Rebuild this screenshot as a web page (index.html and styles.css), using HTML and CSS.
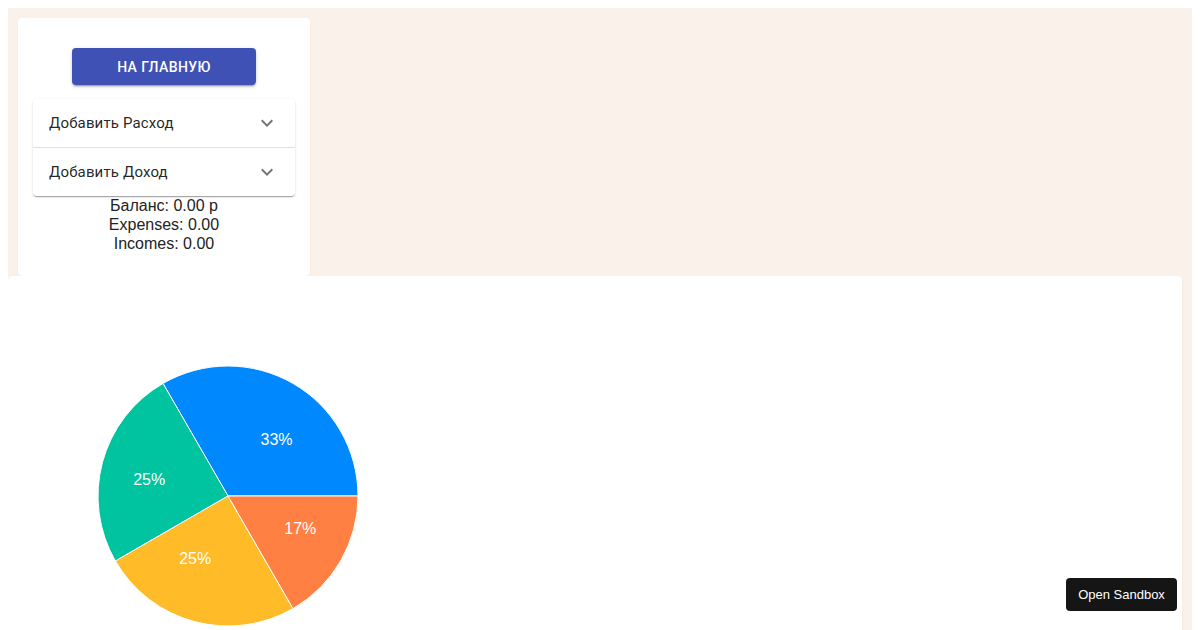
FILE: index.html
```html
<!DOCTYPE html>
<html lang="ru">
<head>
<meta charset="utf-8">
<title>Budget</title>
<link rel="stylesheet" href="styles.css">
</head>
<body>
<div class="app">
  <div class="side-card">
    <button class="home-btn">На главную</button>
    <div class="accordion">
      <div class="acc-row">
        <span class="acc-title">Добавить Расход</span>
        <svg class="acc-icon" viewBox="0 0 24 24" width="24" height="24"><path d="M16.59 8.59 12 13.17 7.41 8.59 6 10l6 6 6-6z"/></svg>
      </div>
      <div class="acc-row acc-row-2">
        <span class="acc-title">Добавить Доход</span>
        <svg class="acc-icon" viewBox="0 0 24 24" width="24" height="24"><path d="M16.59 8.59 12 13.17 7.41 8.59 6 10l6 6 6-6z"/></svg>
      </div>
    </div>
    <div class="totals">
      <div>Баланс: 0.00 р</div>
      <div>Expenses: 0.00</div>
      <div>Incomes: 0.00</div>
    </div>
  </div>
  <div class="chart-card">
    <svg class="pie" width="400" height="400" viewBox="0 0 400 400">
      <g stroke="#fff" stroke-width="1">
        <path fill="#0088FE" d="M200,200 L330,200 A130,130 0 0 0 135,87.42 Z"/>
        <path fill="#00C49F" d="M200,200 L135,87.42 A130,130 0 0 0 87.42,265 Z"/>
        <path fill="#FFBB28" d="M200,200 L87.42,265 A130,130 0 0 0 265,312.58 Z"/>
        <path fill="#FF8042" d="M200,200 L265,312.58 A130,130 0 0 0 330,200 Z"/>
      </g>
      <g class="pie-labels" fill="#fff">
        <text x="232.5" y="143.7" text-anchor="start" dominant-baseline="central">33%</text>
        <text x="137.2" y="183.2" text-anchor="end" dominant-baseline="central">25%</text>
        <text x="183.2" y="262.8" text-anchor="end" dominant-baseline="central">25%</text>
        <text x="256.3" y="232.5" text-anchor="start" dominant-baseline="central">17%</text>
      </g>
    </svg>
  </div>
</div>
<button class="sandbox-btn">Open Sandbox</button>
</body>
</html>
```
FILE: styles.css
```css
html, body {
  margin: 0;
  padding: 0;
}
body {
  margin: 8px;
  font-family: "Liberation Sans", Arial, sans-serif;
  font-size: 16px;
  color: #222;
  background: #fff;
}
.app {
  background: #faf1eb;
  padding: 10px 10px 0 0;
  display: flex;
  flex-direction: column;
  align-items: flex-start;
}
.side-card {
  margin-left: 10px;
  width: 292px;
  height: 258px;
  box-sizing: border-box;
  background: #fff;
  border-radius: 4px;
  box-shadow: 0 1px 2px rgba(0,0,0,0.06);
  padding: 30px 15px 0;
  display: flex;
  flex-direction: column;
  align-items: center;
}
.home-btn {
  width: 184px;
  height: 37px;
  border: none;
  border-radius: 4px;
  background: #3f51b5;
  color: #fff;
  font-family: Roboto, "Liberation Sans", sans-serif;
  font-weight: 500;
  font-size: 14px;
  letter-spacing: 0.4px;
  text-transform: uppercase;
  box-shadow: 0 3px 1px -2px rgba(0,0,0,0.2), 0 2px 2px 0 rgba(0,0,0,0.14), 0 1px 5px 0 rgba(0,0,0,0.12);
  cursor: pointer;
}
.accordion {
  margin-top: 14px;
  width: 262px;
  background: #fff;
  border-radius: 4px;
  box-shadow: 0 2px 1px -1px rgba(0,0,0,0.2), 0 1px 1px 0 rgba(0,0,0,0.14), 0 1px 3px 0 rgba(0,0,0,0.12);
}
.acc-row {
  height: 48px;
  padding: 0 16px;
  display: flex;
  align-items: center;
  justify-content: space-between;
  font-family: Roboto, "Liberation Sans", sans-serif;
  font-size: 15px;
  letter-spacing: 0.15px;
  color: rgba(0,0,0,0.87);
}
.acc-row-2 {
  border-top: 1px solid rgba(0,0,0,0.12);
}
.acc-icon {
  fill: rgba(0,0,0,0.54);
}
.totals {
  text-align: center;
  line-height: 19px;
  color: #222;
}
.chart-card {
  align-self: stretch;
  background: #fff;
  border-radius: 4px;
  box-shadow: 0 1px 2px rgba(0,0,0,0.08);
  padding: 20px;
  height: 420px;
}
.pie {
  display: block;
}
.pie-labels {
  font-family: "Liberation Sans", Arial, sans-serif;
  font-size: 16px;
}
.sandbox-btn {
  position: fixed;
  right: 23px;
  bottom: 19px;
  width: 111px;
  height: 33px;
  background: #151515;
  color: #fff;
  border: none;
  border-radius: 4px;
  font-family: "Liberation Sans", Arial, sans-serif;
  font-size: 13px;
  padding: 0;
}
```
